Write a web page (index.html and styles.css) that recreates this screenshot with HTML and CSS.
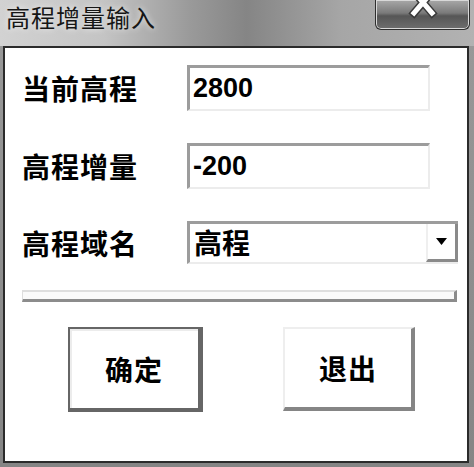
FILE: index.html
```html
<!DOCTYPE html>
<html lang="zh-CN">
<head>
    <meta charset="UTF-8">
    <meta name="viewport" content="width=device-width, initial-scale=1.0">
    <title>高程增量输入</title>
    <link rel="stylesheet" href="styles.css">
</head>
<body>
    <div class="window">
        <div class="titlebar">
            <span class="title">高程增量输入</span>
            <div class="close-btn">
                <svg width="93" height="28" viewBox="0 0 93 28">
                    <path d="M38 -8 L56 13 M56 -8 L38 13" stroke="#3a3a3a" stroke-width="8" stroke-linecap="square"/>
                    <path d="M38 -8 L56 13 M56 -8 L38 13" stroke="#fff" stroke-width="5" stroke-linecap="square"/>
                </svg>
            </div>
        </div>
        <div class="client">
            <div class="form-grid">
                <label class="field-label">当前高程</label>
                <div class="text-box">2800</div>

                <label class="field-label">高程增量</label>
                <div class="text-box">-200</div>

                <label class="field-label">高程域名</label>
                <div class="combo-box">
                    <span class="combo-text">高程</span>
                    <span class="combo-arrow">
                        <svg width="11" height="7" viewBox="0 0 11 7"><path d="M0 0 H11 L5.5 7 Z" fill="#000"/></svg>
                    </span>
                </div>
            </div>

            <div class="separator"></div>

            <div class="button-row">
                <div class="btn btn-default">确定</div>
                <div class="btn">退出</div>
            </div>
        </div>
    </div>
</body>
</html>
```

FILE: styles.css
```css
body {
    margin: 0;
    padding: 0;
    background-color: #8f8f8f;
    font-family: "Noto Sans CJK SC", "Liberation Sans", sans-serif;
}
.window {
    width: 474px;
    height: 467px;
    display: flex;
    flex-direction: column;
    background: linear-gradient(to bottom, #9a9a9a, #858585);
    overflow: hidden;
}
.titlebar {
    height: 46px;
    flex: none;
    display: flex;
    justify-content: space-between;
    align-items: flex-start;
    padding: 0 4px 0 6px;
    box-sizing: border-box;
    background: linear-gradient(to right, #d2d2d2 0%, #c4c4c4 22%, #9a9a9a 40%, #858585 52%, #a6a6a6 72%, #b2b2b2 100%);
}
.title {
    font-size: 24px;
    line-height: 24px;
    margin-top: 5px;
    letter-spacing: 1px;
    color: #161616;
    text-shadow: 0 0 6px rgba(255, 255, 255, 0.8);
}
.close-btn {
    width: 95px;
    height: 30px;
    box-sizing: border-box;
    border: 1px solid #2e2e2e;
    border-top: none;
    border-radius: 0 0 6px 6px;
    box-shadow: inset 0 0 0 1px #d8d8d8;
    background: linear-gradient(to bottom, #a8a8a8 0%, #7a7a7a 45%, #565656 55%, #6e6e6e 100%);
    overflow: hidden;
}
.close-btn svg {
    display: block;
}
.client {
    flex: 1;
    margin: 0 5px 4px 3px;
    background-color: #fff;
    border: 2px solid #2b2b2b;
    padding: 17px 0 0 17px;
}
.form-grid {
    display: grid;
    grid-template-columns: 165px auto;
    grid-template-rows: 46px 46px 43px;
    row-gap: 32px;
    align-items: center;
}
.field-label {
    font-size: 28px;
    font-weight: bold;
    letter-spacing: 1px;
    color: #000;
    line-height: 28px;
}
.text-box {
    width: 243px;
    height: 46px;
    box-sizing: border-box;
    border-top: 3px solid #9c9c9c;
    border-left: 3px solid #9c9c9c;
    border-bottom: 2px solid #ececec;
    border-right: 2px solid #ececec;
    padding-left: 3px;
    font-family: "Liberation Sans", sans-serif;
    font-weight: bold;
    font-size: 27px;
    line-height: 40px;
    color: #000;
}
.combo-box {
    width: 271px;
    height: 43px;
    box-sizing: border-box;
    display: flex;
    border-top: 3px solid #9c9c9c;
    border-left: 3px solid #9c9c9c;
    border-bottom: 2px solid #ececec;
}
.combo-text {
    flex: 1;
    padding-left: 4px;
    font-size: 28px;
    font-weight: bold;
    line-height: 37px;
    color: #000;
}
.combo-arrow {
    width: 32px;
    box-sizing: border-box;
    border-left: 2px solid #efefef;
    border-bottom: 3px solid #8a8a8a;
    border-right: 3px solid #8a8a8a;
    display: flex;
    align-items: center;
    justify-content: center;
    padding-bottom: 1px;
}
.separator {
    width: 435px;
    height: 12px;
    box-sizing: border-box;
    margin-top: 26px;
    background-color: #fafafa;
    border-top: 2px solid #dedede;
    border-left: 1px solid #dedede;
    border-bottom: 3px solid #8c8c8c;
    border-right: 3px solid #8c8c8c;
}
.button-row {
    display: flex;
    gap: 80px;
    margin-top: 25px;
    padding-left: 46px;
}
.btn {
    width: 132px;
    height: 84px;
    box-sizing: border-box;
    border-top: 2px solid #eeeeee;
    border-left: 2px solid #eeeeee;
    border-bottom: 4px solid #858585;
    border-right: 4px solid #858585;
    display: flex;
    align-items: center;
    justify-content: center;
    font-size: 28px;
    font-weight: bold;
    letter-spacing: 1px;
    color: #000;
}
.btn-default {
    width: 135px;
    height: 85px;
    border: 2px solid #666;
    border-bottom-width: 4px;
    border-right-width: 5px;
    box-shadow: inset 2px 2px 0 #ececec;
}
```
